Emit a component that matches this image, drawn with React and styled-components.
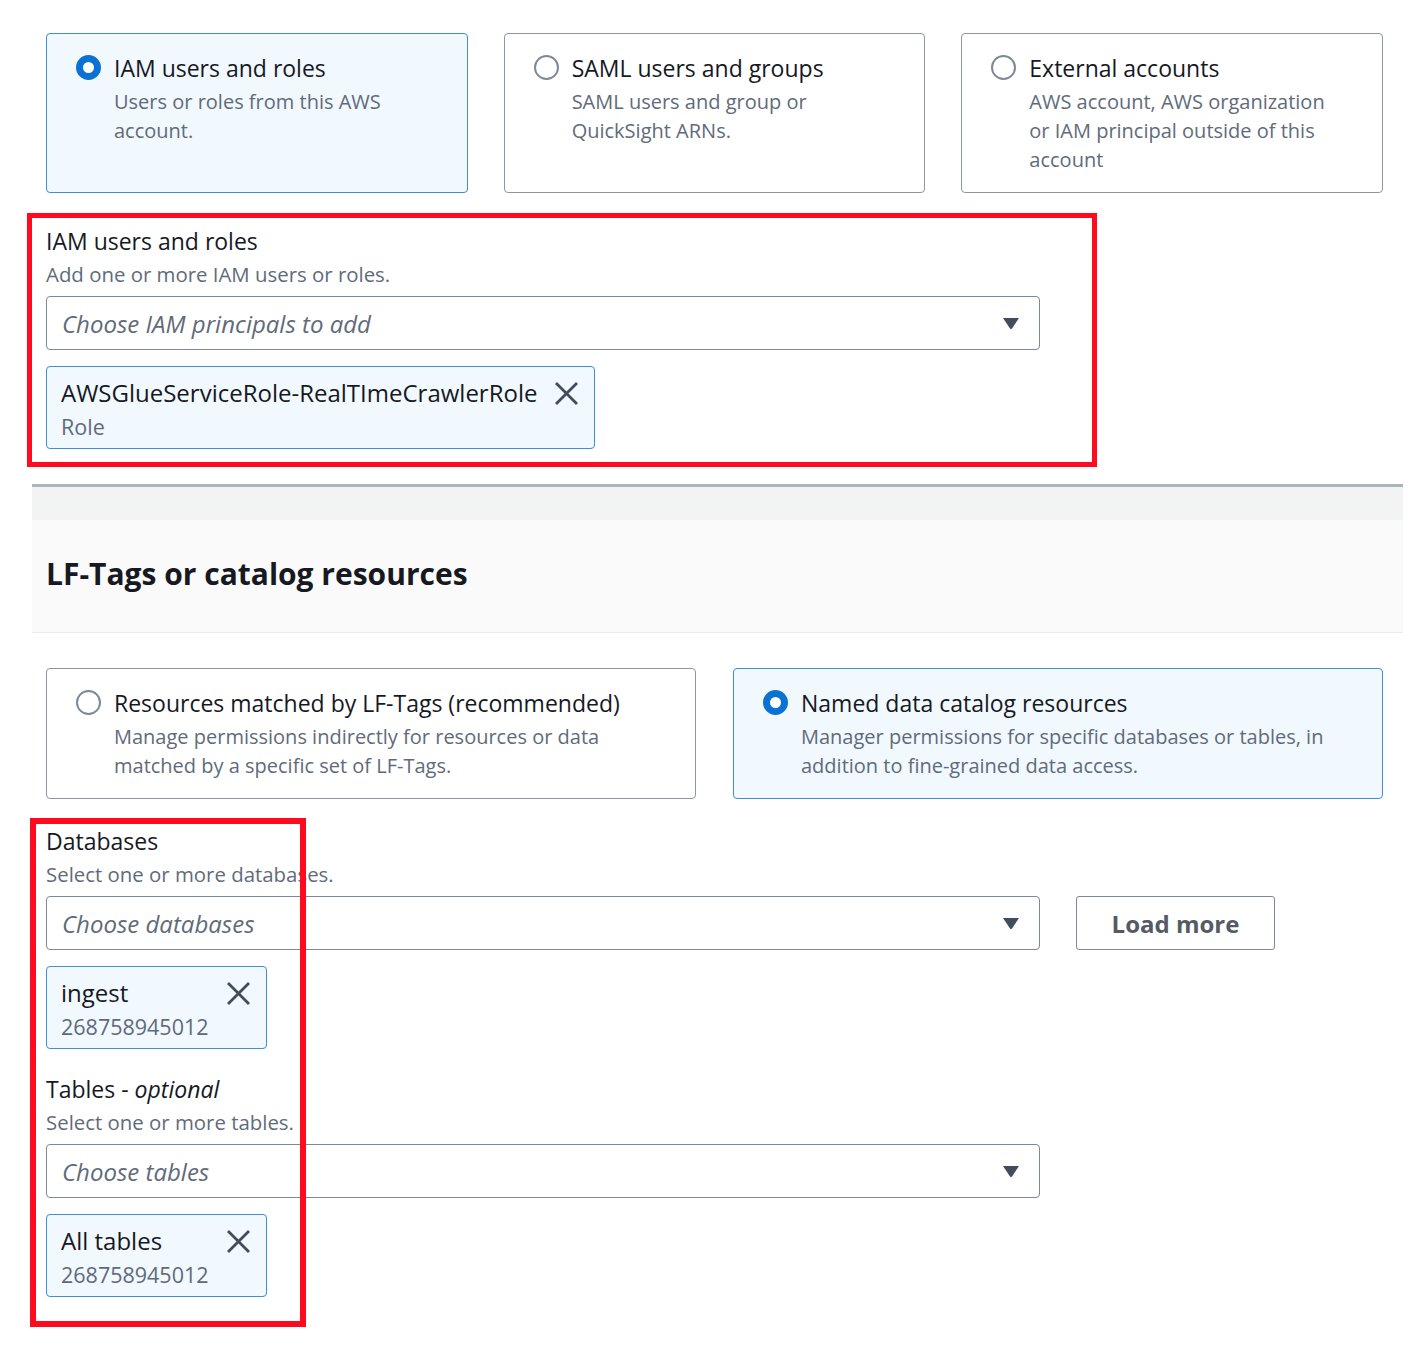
import React from "react";
import styled, { createGlobalStyle } from "styled-components";

const GlobalStyle = createGlobalStyle`
  * { box-sizing: border-box; }
  body {
    margin: 0;
    background: #fff;
    font-family: "Open Sans", "Noto Sans", Arial, sans-serif;
    color: #16191f;
  }
`;

const principalOptions = [
  {
    id: "iam",
    title: "IAM users and roles",
    desc: "Users or roles from this AWS account.",
    selected: true,
  },
  {
    id: "saml",
    title: "SAML users and groups",
    desc: "SAML users and group or QuickSight ARNs.",
  },
  {
    id: "ext",
    title: "External accounts",
    desc: "AWS account, AWS organization or IAM principal outside of this account",
  },
];

const resourceOptions = [
  {
    id: "lf",
    title: "Resources matched by LF-Tags (recommended)",
    desc: "Manage permissions indirectly for resources or data matched by a specific set of LF-Tags.",
  },
  {
    id: "named",
    title: "Named data catalog resources",
    desc: "Manager permissions for specific databases or tables, in addition to fine-grained data access.",
    selected: true,
  },
];

const Caret = () => (
  <svg width="18" height="13" viewBox="0 0 18 13">
    <path d="M1 1 H17 L10 11.5 Q9 12.8 8 11.5 Z" fill="#414d5c" />
  </svg>
);

const CloseIcon = () => (
  <svg width="23" height="23" viewBox="0 0 23 23">
    <path
      d="M2 2 L21 21 M21 2 L2 21"
      stroke="#414d5c"
      strokeWidth="2.8"
      strokeLinecap="square"
    />
  </svg>
);

const OptionCard = ({ title, desc, selected }) => (
  <Card $selected={selected}>
    <Radio $selected={selected} />
    <div>
      <CardTitle>{title}</CardTitle>
      <CardDesc>{desc}</CardDesc>
    </div>
  </Card>
);

const TokenChip = ({ name, meta }) => (
  <Token>
    <TokenBody>
      <TokenName>{name}</TokenName>
      <TokenMeta>{meta}</TokenMeta>
    </TokenBody>
    <Dismiss>
      <CloseIcon />
    </Dismiss>
  </Token>
);

const SelectBox = ({ placeholder }) => (
  <Select>
    <Placeholder>{placeholder}</Placeholder>
    <Caret />
  </Select>
);

const App = () => {
  return (
    <Page>
      <GlobalStyle />
      <Inner>
        <CardGrid $cols={3} $gap={36}>
          {principalOptions.map((o) => (
            <OptionCard key={o.id} {...o} />
          ))}
        </CardGrid>

        <Field $mt={33}>
          <Label>IAM users and roles</Label>
          <Hint>Add one or more IAM users or roles.</Hint>
          <SelectRow>
            <SelectBox placeholder="Choose IAM principals to add" />
          </SelectRow>
          <TokenChip name="AWSGlueServiceRole-RealTImeCrawlerRole" meta="Role" />
        </Field>
      </Inner>

      <Divider />
      <Band />
      <SectionHeader>
        <Heading>LF-Tags or catalog resources</Heading>
      </SectionHeader>

      <Inner>
        <CardGrid $cols={2} $gap={37} $mt={35}>
          {resourceOptions.map((o) => (
            <OptionCard key={o.id} {...o} />
          ))}
        </CardGrid>

        <Field $mt={27}>
          <Label>Databases</Label>
          <Hint>Select one or more databases.</Hint>
          <SelectRow>
            <SelectBox placeholder="Choose databases" />
            <Button>Load more</Button>
          </SelectRow>
          <TokenChip name="ingest" meta="268758945012" />
        </Field>

        <Field $mt={25}>
          <Label>
            Tables - <em>optional</em>
          </Label>
          <Hint>Select one or more tables.</Hint>
          <SelectRow>
            <SelectBox placeholder="Choose tables" />
          </SelectRow>
          <TokenChip name="All tables" meta="268758945012" />
        </Field>
      </Inner>

      <Highlight $left={27} $top={213} $w={1070} $h={254} $b={5} />
      <Highlight $left={30} $top={818} $w={276} $h={509} $b={6} />
    </Page>
  );
};

export default App;

const Page = styled.div`
  position: relative;
  width: 1422px;
  min-height: 1352px;
  padding: 33px 19px 0 32px;
`;

const Inner = styled.div`
  padding: 0 20px 0 14px;
`;

const CardGrid = styled.div`
  display: grid;
  grid-template-columns: repeat(${(p) => p.$cols}, 1fr);
  column-gap: ${(p) => p.$gap}px;
  margin-top: ${(p) => p.$mt || 0}px;
`;

const Card = styled.div`
  display: flex;
  gap: 13px;
  padding: 17px 36px 18px 29px;
  border: 1px solid ${(p) => (p.$selected ? "#3f8fd2" : "#8d96a2")};
  border-radius: 4px;
  background: ${(p) => (p.$selected ? "#f1f8fe" : "#fff")};
`;

const Radio = styled.span`
  flex-shrink: 0;
  width: 25px;
  height: 25px;
  margin-top: 4px;
  border-radius: 50%;
  background: #fff;
  border: ${(p) => (p.$selected ? "7.5px solid #0972d3" : "2px solid #7d8998")};
`;

const CardTitle = styled.div`
  font-size: 23px;
  line-height: 34px;
  color: #16191f;
`;

const CardDesc = styled.div`
  margin-top: 2px;
  font-size: 20px;
  line-height: 29px;
  color: #5f6b7a;
`;

const Field = styled.div`
  margin-top: ${(p) => p.$mt}px;
  display: flex;
  flex-direction: column;
  align-items: flex-start;
`;

const Label = styled.div`
  font-size: 23px;
  line-height: 30px;
  color: #16191f;

  em {
    font-style: italic;
  }
`;

const Hint = styled.div`
  margin-top: 4px;
  font-size: 20.4px;
  line-height: 29px;
  color: #5f6b7a;
`;

const SelectRow = styled.div`
  display: flex;
  gap: 36px;
  margin-top: 7px;
`;

const Select = styled.div`
  width: 994px;
  height: 54px;
  display: flex;
  align-items: center;
  justify-content: space-between;
  padding: 0 19px 0 15px;
  border: 1px solid #7d8998;
  border-radius: 4px;
  background: #fff;
`;

const Placeholder = styled.span`
  font-size: 24px;
  font-style: italic;
  color: #5f6b7a;
`;

const Button = styled.button`
  width: 199px;
  height: 54px;
  border: 1px solid #7d8998;
  border-radius: 3px;
  background: #fff;
  font-family: inherit;
  font-size: 24px;
  font-weight: 700;
  color: #545b64;
`;

const Token = styled.div`
  display: inline-flex;
  align-items: flex-start;
  margin-top: 16px;
  border: 1px solid #3f8fd2;
  border-radius: 4px;
  background: #f1f8fe;
`;

const TokenBody = styled.div`
  padding: 11px 0 6px 14px;
`;

const TokenName = styled.div`
  font-size: 24px;
  line-height: 30px;
  color: #16191f;
`;

const TokenMeta = styled.div`
  margin-top: 4px;
  font-size: 21.5px;
  line-height: 30px;
  color: #5f6b7a;
`;

const Dismiss = styled.span`
  display: flex;
  margin: 15px 16px 0 18px;
`;

const Divider = styled.div`
  margin-top: 35px;
  height: 3px;
  background: #aab7b8;
`;

const Band = styled.div`
  height: 33px;
  background: #f2f3f3;
`;

const SectionHeader = styled.div`
  height: 113px;
  display: flex;
  align-items: center;
  padding: 0 0 5px 14px;
  background: #fafafa;
  border-bottom: 1px solid #eaeded;
`;

const Heading = styled.h2`
  margin: 0;
  font-size: 30px;
  font-weight: 700;
  color: #16191f;
`;

const Highlight = styled.div`
  position: absolute;
  left: ${(p) => p.$left}px;
  top: ${(p) => p.$top}px;
  width: ${(p) => p.$w}px;
  height: ${(p) => p.$h}px;
  border: ${(p) => p.$b}px solid #ff0a1e;
  pointer-events: none;
`;
